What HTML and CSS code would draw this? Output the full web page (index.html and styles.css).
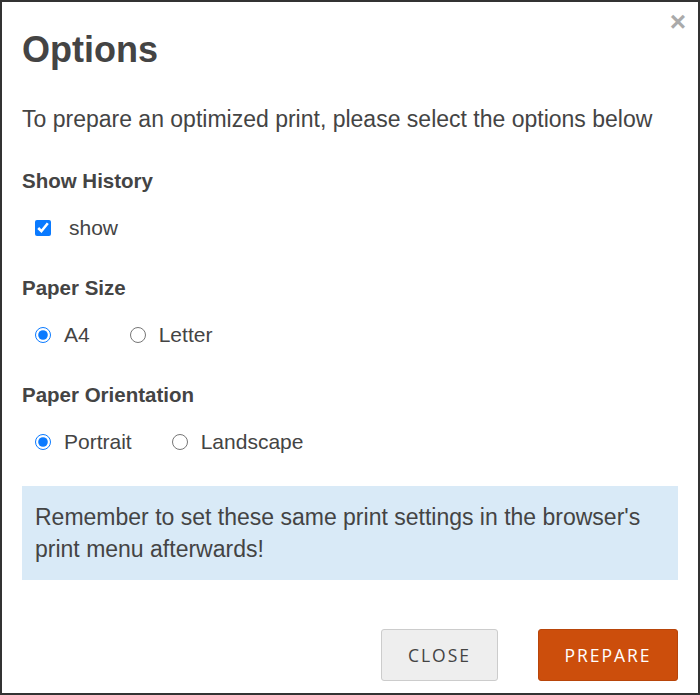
FILE: index.html
```html
<!DOCTYPE html>
<html lang="en">
<head>
  <meta charset="UTF-8" />
  <meta name="viewport" content="width=device-width, initial-scale=1.0" />
  <title>Options</title>
  <link rel="stylesheet" href="styles.css">
</head>
<body>

  <div class="dialog">
    <span class="close-x">&times;</span>

    <h1>Options</h1>
    <p class="intro">To prepare an optimized print, please select the options below</p>

    <div class="group">
      <h2>Show History</h2>
      <div class="choices">
        <label class="choice check">
          <input type="checkbox" checked />
          <span>show</span>
        </label>
      </div>
    </div>

    <div class="group">
      <h2>Paper Size</h2>
      <div class="choices">
        <label class="choice">
          <input type="radio" name="size" checked />
          <span>A4</span>
        </label>
        <label class="choice">
          <input type="radio" name="size" />
          <span>Letter</span>
        </label>
      </div>
    </div>

    <div class="group">
      <h2>Paper Orientation</h2>
      <div class="choices">
        <label class="choice">
          <input type="radio" name="orient" checked />
          <span>Portrait</span>
        </label>
        <label class="choice">
          <input type="radio" name="orient" />
          <span>Landscape</span>
        </label>
      </div>
    </div>

    <div class="notice">
      Remember to set these same print settings in the browser's print menu afterwards!
    </div>

    <div class="actions">
      <button class="btn btn-close">Close</button>
      <button class="btn btn-prepare">Prepare</button>
    </div>
  </div>

</body>
</html>
```

FILE: styles.css
```css
* {
  margin: 0;
  padding: 0;
  box-sizing: border-box;
}

body {
  font-family: "Liberation Sans", Arial, sans-serif;
  color: #444;
  background: #fff;
}

.dialog {
  position: relative;
  width: 700px;
  height: 695px;
  border: 2px solid #333;
  padding: 28px 20px 0 20px;
}

.close-x {
  position: absolute;
  top: 6px;
  right: 12px;
  font-size: 28px;
  font-weight: bold;
  color: #aaa;
  line-height: 1;
}

h1 {
  font-size: 36px;
  line-height: 40px;
  font-weight: bold;
  color: #444;
}

.intro {
  font-size: 23px;
  line-height: 28px;
  margin-top: 35px;
}

.group {
  margin-top: 36px;
}

h2 {
  font-size: 20.5px;
  line-height: 24px;
  font-weight: bold;
}

.choices {
  display: flex;
  gap: 40px;
  padding-left: 13px;
  margin-top: 23px;
}

.choice {
  display: flex;
  align-items: center;
  gap: 13px;
  font-size: 21px;
  line-height: 24px;
}

.choice.check {
  gap: 18px;
}

.choice input {
  width: 16px;
  height: 16px;
  margin: 0;
  accent-color: #0a7aff;
}

.notice {
  margin-top: 32px;
  background: #d9eaf7;
  padding: 15px 13px;
  font-size: 23px;
  line-height: 32px;
  width: 656px;
}

.actions {
  display: flex;
  justify-content: flex-end;
  gap: 40px;
  margin-top: 49px;
}

.btn {
  height: 52px;
  font-family: "Open Sans", sans-serif;
  font-size: 17.5px;
  letter-spacing: 2px;
  text-transform: uppercase;
  border-radius: 3px;
  cursor: pointer;
}

.btn-close {
  width: 117px;
  background: #eee;
  border: 1px solid #ccc;
  color: #444;
}

.btn-prepare {
  width: 140px;
  background: #cc4e0c;
  border: 1px solid #b8450a;
  color: #fff;
}
```
